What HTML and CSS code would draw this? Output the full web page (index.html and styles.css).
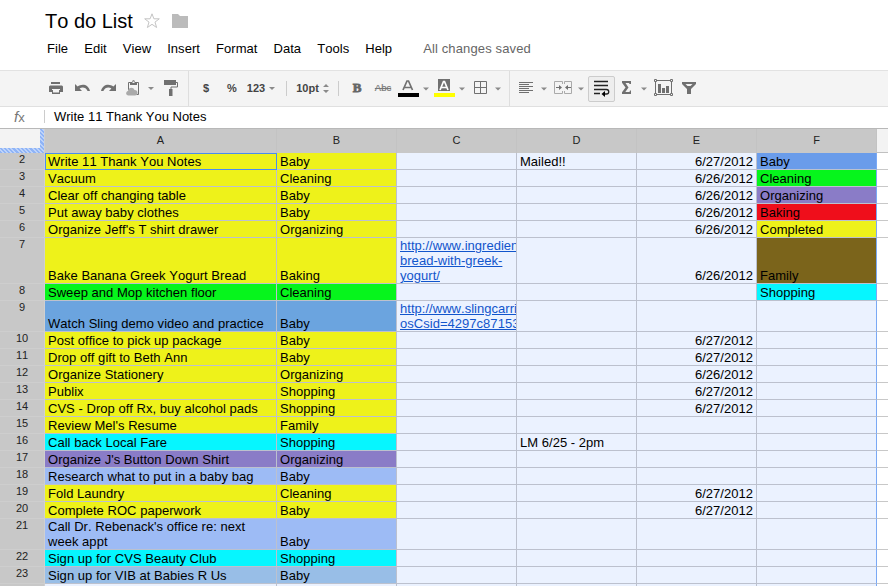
FILE: index.html
```
<!DOCTYPE html>
<html lang="en">
<head>
    <meta charset="UTF-8">
    <meta name="viewport" content="width=device-width, initial-scale=1.0">
    <title>To do List</title>
    <link rel="stylesheet" href="styles.css">
</head>
<body>
    <header class="header">
        <div class="title-row">
            <h1>To do List</h1>
            <svg class="star" width="16" height="16" viewBox="0 0 16 16"><path d="M8 .8l1.900 5h5.400l-4.300 3.300 1.600 5.400L8 11.300l-4.600 3.200L5 9.100.7 5.800h5.400z"/></svg>
            <svg class="folder" width="16" height="16" viewBox="0 0 16 16"><path d="M0 1h6l2 2h8v12H0z"/></svg>
        </div>
        <nav class="menu">
            <span>File</span>
            <span>Edit</span>
            <span>View</span>
            <span>Insert</span>
            <span>Format</span>
            <span>Data</span>
            <span>Tools</span>
            <span>Help</span>
            <span class="status">All changes saved</span>
        </nav>
    </header>

    <div class="toolbar">
        <div class="group group-edit">
            <svg width="27" height="21"><path d="M9 4h9v2H9zM8 7.500h12l1 1V14h-3v-3H10v3H7V8.500z"/><path d="M10 12h8v4h-8z"/><path class="paper" d="M11 12h6v2.500h-6z"/></svg>
            <svg width="26" height="21"><path d="M6 6v7h7l-2.400-2.400c2-1.700 6.400-1.700 8 2.400h2.400C19.500 6 12.500 5.200 8.600 8.600z"/></svg>
            <svg width="27" height="21"><path d="M21 6v7h-7l2.400-2.400c-2-1.700-6.400-1.700-8 2.400H6C7.500 6 14.500 5.200 18.400 8.600z"/></svg>
            <svg width="22" height="21"><path d="M6.500 12V4.500H9M13 4.500h3.500v12H13" class="line"/><path d="M8 4h2c0-2.500 3-2.500 3 0h2v3H8z"/><path class="paper" d="M10.500 3.500h2v1.500h-2z"/><path class="cloud" d="M6.500 17.500C3.500 17.500 3.500 13.500 6 13c.5-4 5.500-4 6.500-1 2 0 3 1.300 3 3s-1 2.500-2.500 2.500z"/></svg>
            <svg width="14" height="21"><path class="caret" d="M4 9h6l-3 3z"/></svg>
            <svg width="26" height="21"><path d="M6 2h12v5H6z"/><path d="M18 4.500h1.500v4.500h-6.500v3" class="line"/><path d="M11 11h3.500v7H11z"/></svg>
        </div>
        <div class="group group-number">
            <span class="tool dollar">$</span>
            <span class="tool percent">%</span>
            <span class="tool formats">123</span>
            <svg width="10" height="21"><path class="caret" d="M2 9h6l-3 3z"/></svg>
            <i class="divider divider-size"></i>
            <span class="tool size">10pt</span>
            <svg width="14" height="21"><path class="caret" d="M3 9h6L6 6zM3 12h6l-3 3z"/></svg>
            <i class="divider divider-style"></i>
            <span class="tool bold">B</span>
            <span class="tool strike">Abc</span>
            <svg width="23" height="21"><path d="M6 12l4-9h1.500l4 9M7.500 9.500h6.500" class="letter"/><path class="black" d="M1 15h21v4H1z"/></svg>
            <svg width="12" height="21"><path class="caret" d="M3 9.500h6l-3 3z"/></svg>
            <svg width="25" height="21"><path d="M6 1h12v12H6z"/><path d="M8 12l3.500-8.500h1L16 12M9.500 9.500h5" class="letter inverse"/><path class="yellow" d="M2 15h21v4H2z"/></svg>
            <svg width="10" height="21"><path class="caret" d="M2 9.500h6l-3 3z"/></svg>
            <svg width="27" height="21"><path d="M7.500 3.500h12v12h-12zM13.500 3.500v12M7.500 9.500h12" class="line"/></svg>
            <svg width="8" height="21"><path class="caret" d="M1 9.500h6l-3 3z"/></svg>
        </div>
        <div class="group group-layout">
            <svg width="22" height="21"><path d="M4 4.500h14M4 6.500h10M4 8.500h14M4 10.500h10M4 12.500h14M4 14.500h10" class="line"/></svg>
            <svg width="14" height="21"><path class="caret" d="M4 9.500h6l-3 3z"/></svg>
            <svg width="24" height="21"><path d="M11.500 6V3.500h-8v12h8V13M13.500 6V3.500h7v12h-7V13" class="line light"/><path d="M5 9h3V7l3 2.500L8 12v-2H5zM20 9h-3V7l-3 2.500 3 2.500v-2h3z"/></svg>
            <svg width="12" height="21"><path class="caret" d="M3 9.500h6l-3 3z"/></svg>
            <div class="wrap">
                <svg width="25" height="21"><path d="M5 3.500h14M5 7.500h14M5 11.500h12.500c3 0 3 4.500 0 4.500H14M5 15.500h6" class="line dark"/><path d="M12.500 16l3.500-3v6z" class="black"/></svg>
            </div>
            <svg width="23" height="21"><path d="M7 3h9v3h-1.500l-.5-1h-3.500l3 4.500-3.200 4.500H14.500l.5-1.500h1V16H7v-1.800L10.500 9.500 7 4.800z"/></svg>
            <svg width="12" height="21"><path class="caret" d="M3 9.500h6l-3 3z"/></svg>
            <svg class="chart" width="25" height="21"><path d="M4.500 2.500h16v14h-16z" class="line"/><path d="M7 6h3v9H7zM11 10h3v5h-3zM15 8h3v7h-3z"/><path d="M3.500 1.500h2v2h-2zM19.500 1.500h2v2h-2zM3.500 15.500h2v2h-2zM19.500 15.500h2v2h-2z" class="line handle"/></svg>
            <svg width="26" height="21"><path d="M6 4h14v2l-5 5v5h-4v-5L6 6z"/><path class="paper" d="M9.500 6h7l-2 2h-3z"/></svg>
        </div>
    </div>

    <div class="formula-bar">
        <span class="fx">f<small>x</small></span>
        <span class="formula">Write 11 Thank You Notes</span>
    </div>

    <table class="sheet">
        <colgroup>
            <col class="col-num"><col class="col-a"><col class="col"><col class="col"><col class="col"><col class="col"><col class="col"><col>
        </colgroup>
        <thead>
            <tr><th class="corner"></th><th>A</th><th>B</th><th>C</th><th>D</th><th>E</th><th>F</th><th class="rest"></th></tr>
        </thead>
        <tbody>
            <tr><th>2</th><td class="yellow active">Write 11 Thank You Notes</td><td class="yellow">Baby</td><td></td><td>Mailed!!</td><td>6/27/2012</td><td class="baby">Baby</td><td></td></tr>
            <tr><th>3</th><td class="yellow">Vacuum</td><td class="yellow">Cleaning</td><td></td><td></td><td>6/26/2012</td><td class="green">Cleaning</td><td></td></tr>
            <tr><th>4</th><td class="yellow">Clear off changing table</td><td class="yellow">Baby</td><td></td><td></td><td>6/26/2012</td><td class="purple">Organizing</td><td></td></tr>
            <tr><th>5</th><td class="yellow">Put away baby clothes</td><td class="yellow">Baby</td><td></td><td></td><td>6/26/2012</td><td class="red">Baking</td><td></td></tr>
            <tr><th>6</th><td class="yellow">Organize Jeff's T shirt drawer</td><td class="yellow">Organizing</td><td></td><td></td><td>6/26/2012</td><td class="yellow">Completed</td><td></td></tr>
            <tr class="lines-3"><th>7</th><td class="yellow">Bake Banana Greek Yogurt Bread</td><td class="yellow">Baking</td><td><a>http://www.ingredien<br>bread-with-greek-<br>yogurt/</a></td><td></td><td>6/26/2012</td><td class="brown">Family</td><td></td></tr>
            <tr><th>8</th><td class="green">Sweep and Mop kitchen floor</td><td class="green">Cleaning</td><td></td><td></td><td></td><td class="cyan">Shopping</td><td></td></tr>
            <tr class="lines-2"><th>9</th><td class="blue">Watch Sling demo video and practice</td><td class="blue">Baby</td><td><a>http://www.slingcarri<br>osCsid=4297c87153</a></td><td></td><td></td><td></td><td></td></tr>
            <tr><th>10</th><td class="yellow">Post office to pick up package</td><td class="yellow">Baby</td><td></td><td></td><td>6/27/2012</td><td></td><td></td></tr>
            <tr><th>11</th><td class="yellow">Drop off gift to Beth Ann</td><td class="yellow">Baby</td><td></td><td></td><td>6/27/2012</td><td></td><td></td></tr>
            <tr><th>12</th><td class="yellow">Organize Stationery</td><td class="yellow">Organizing</td><td></td><td></td><td>6/26/2012</td><td></td><td></td></tr>
            <tr><th>13</th><td class="yellow">Publix</td><td class="yellow">Shopping</td><td></td><td></td><td>6/27/2012</td><td></td><td></td></tr>
            <tr><th>14</th><td class="yellow">CVS - Drop off Rx, buy alcohol pads</td><td class="yellow">Shopping</td><td></td><td></td><td>6/27/2012</td><td></td><td></td></tr>
            <tr><th>15</th><td class="yellow">Review Mel's Resume</td><td class="yellow">Family</td><td></td><td></td><td></td><td></td><td></td></tr>
            <tr><th>16</th><td class="cyan">Call back Local Fare</td><td class="cyan">Shopping</td><td></td><td>LM 6/25 - 2pm</td><td></td><td></td><td></td></tr>
            <tr><th>17</th><td class="purple">Organize J's Button Down Shirt</td><td class="purple">Organizing</td><td></td><td></td><td></td><td></td><td></td></tr>
            <tr><th>18</th><td class="periwinkle">Research what to put in a baby bag</td><td class="periwinkle">Baby</td><td></td><td></td><td></td><td></td><td></td></tr>
            <tr><th>19</th><td class="yellow">Fold Laundry</td><td class="yellow">Cleaning</td><td></td><td></td><td>6/27/2012</td><td></td><td></td></tr>
            <tr><th>20</th><td class="yellow">Complete ROC paperwork</td><td class="yellow">Baby</td><td></td><td></td><td>6/27/2012</td><td></td><td></td></tr>
            <tr class="lines-2"><th>21</th><td class="periwinkle">Call Dr. Rebenack's office re: next<br>week appt</td><td class="periwinkle">Baby</td><td></td><td></td><td></td><td></td><td></td></tr>
            <tr><th>22</th><td class="cyan">Sign up for CVS Beauty Club</td><td class="cyan">Shopping</td><td></td><td></td><td></td><td></td><td></td></tr>
            <tr><th>23</th><td class="sky">Sign up for VIB at Babies R Us</td><td class="sky">Baby</td><td></td><td></td><td></td><td></td><td></td></tr>
            <tr><th></th><td></td><td></td><td></td><td></td><td></td><td></td><td></td></tr>
        </tbody>
    </table>
</body>
</html>
```
FILE: styles.css
```
:root {
    --icon: #707070;
    --bar: #f4f4f4;
    --head: #c8c8c8;
    --selected: #ebf2ff;
    --line: #bcc1ce;
    --blue-line: #7aa9f5;
}

* {
    box-sizing: border-box;
    margin: 0;
    padding: 0;
}

body {
    width: 888px;
    height: 586px;
    overflow: hidden;
    background: #fff;
    color: #000;
    font-family: "Liberation Sans", Arial, sans-serif;
    font-size: 13px;
    font-kerning: none;
}

/* Title and menu */
.header {
    height: 70px;
    padding-top: 9px;
}

.title-row {
    display: flex;
    align-items: center;
    height: 24px;
    padding-left: 45px;
}

h1 {
    font-size: 20px;
    font-weight: normal;
    line-height: 24px;
}

.star {
    margin-left: 11px;
    fill: none;
    stroke: #c4c4c4;
}

.folder {
    margin-left: 12px;
    fill: #bbb;
}

.menu {
    display: flex;
    padding: 8px 0 0 39px;
    letter-spacing: 0.05px;
    line-height: 15px;
}

.menu span {
    padding: 0 8px;
}

.menu .status {
    margin-left: 15px;
    color: #666;
    letter-spacing: 0.13px;
}

/* Toolbar */
.toolbar {
    display: flex;
    height: 37px;
    border-top: 1px solid #e2e2e2;
    border-bottom: 1px solid #e0e0e0;
    background: var(--bar);
}

.group {
    display: flex;
    align-items: center;
}

.group-edit {
    width: 189px;
    padding-left: 42px;
    border-right: 1px solid #dedede;
}

.group-number {
    width: 321px;
    padding-left: 4px;
    border-right: 1px solid #dedede;
}

.group-layout {
    padding-left: 5px;
}

.toolbar svg {
    display: block;
    flex: none;
    fill: var(--icon);
}

.toolbar .line {
    fill: none;
    stroke: var(--icon);
}

.toolbar .light {
    stroke: #aaa;
}

.toolbar .dark {
    stroke: #222;
    stroke-width: 1.3;
}

.toolbar .letter {
    fill: none;
    stroke: var(--icon);
    stroke-width: 1.7;
}

.toolbar .inverse {
    stroke: #fff;
}

.toolbar .paper,
.toolbar .handle {
    fill: var(--bar);
}

.toolbar .cloud {
    fill: #aaa;
}

.toolbar .caret {
    fill: #8a8a8a;
}

.toolbar .black {
    fill: #000;
}

.toolbar svg .yellow {
    fill: #ff0;
}

.tool {
    flex: none;
    padding-bottom: 1px;
    color: #444;
    font-size: 11px;
    font-weight: bold;
    text-align: center;
}

.dollar,
.percent {
    width: 26px;
}

.formats {
    width: 22px;
}

.size {
    width: 25px;
    margin-left: 8px;
}

.bold {
    width: 24px;
    margin-left: 6px;
    color: #666;
    font-family: "Liberation Serif", serif;
    font-size: 13px;
    -webkit-text-stroke: 0.8px #666;
}

.strike {
    width: 28px;
    padding-bottom: 2px;
    color: #777;
    font-size: 9.500px;
    font-weight: normal;
    -webkit-text-stroke: 0.2px #777;
    text-decoration: line-through;
}

.divider {
    width: 1px;
    height: 15px;
    background: #ccc;
}

.divider-size {
    margin-left: 9px;
}

.divider-style {
    margin-left: 4px;
}

.wrap {
    display: flex;
    align-items: center;
    width: 27px;
    height: 26px;
    margin-left: 1px;
    border: 1px solid #ccc;
    border-radius: 2px;
    background: #eee;
}

.chart {
    margin-left: 1px;
}

/* Formula bar */
.formula-bar {
    display: flex;
    align-items: center;
    height: 21px;
    padding-bottom: 2px;
}

.fx {
    width: 45px;
    height: 13px;
    padding-left: 14px;
    border-right: 1px solid #ccc;
    color: #777;
    font-size: 15px;
    font-style: italic;
    line-height: 14px;
}

.fx small {
    font-size: 13px;
    font-style: normal;
}

.formula {
    padding-left: 9px;
}

/* Spreadsheet grid */
.sheet {
    width: 888px;
    table-layout: fixed;
    border-collapse: separate;
    border-spacing: 0;
    border-top: 1px solid #b8b8b8;
}

.col-num {
    width: 45px;
}

.col-a {
    width: 232px;
}

.col {
    width: 120px;
}

.sheet th {
    background: var(--head);
    color: #222;
    font-size: 11px;
    font-weight: normal;
}

.sheet thead th {
    height: 24px;
    padding-bottom: 2px;
    border-right: 1px solid #c3c3c3;
    line-height: 13px;
}

/* striped handle for the frozen rows */
.sheet thead .corner {
    border-right: 1px solid #d0d0d0;
    background:
        linear-gradient(#f3f3f3, #f3f3f3) 0 0 / 40px 19px no-repeat,
        repeating-linear-gradient(45deg, #8fb4f7 0 1.500px, #bdd3fa 1.500px 3px);
}

.sheet thead .rest {
    border-right: 0;
    border-bottom: 1px solid #c0c0c0;
    background: #f3f3f3;
}

.sheet tbody tr {
    height: 17px;
}

.sheet tbody .lines-2 {
    height: 31px;
}

.sheet tbody .lines-3 {
    height: 46px;
}

.sheet tbody th {
    border-right: 1px solid #d0d0d0;
    border-bottom: 1px solid #cecece;
    line-height: 13px;
    vertical-align: top;
}

.sheet td {
    padding: 0 3px;
    overflow: hidden;
    border-right: 1px solid var(--line);
    border-bottom: 1px solid var(--line);
    background: var(--selected);
    letter-spacing: 0.03px;
    line-height: 15px;
    vertical-align: bottom;
    white-space: nowrap;
}

.sheet td:nth-child(6) {
    text-align: right;
}

.sheet td:nth-child(7) {
    border-right-color: var(--blue-line);
}

.sheet td:last-child {
    border-right: 0;
    border-color: #c8c8c8;
    background: #fff;
}

.sheet a {
    color: #1155cc;
    text-decoration: underline;
}

.sheet .active {
    border-color: #4a8cf0;
    box-shadow: inset 1px 1px #4a8cf0;
}

.sheet .yellow { background: #eef21a; }
.sheet .green { background: #06f51c; }
.sheet .baby { background: #6a9cea; }
.sheet .blue { background: #6ba4df; }
.sheet .periwinkle { background: #9dbbf5; }
.sheet .sky { background: #98bee7; }
.sheet .purple { background: #8a7cc7; }
.sheet .cyan { background: #06f6ff; }
.sheet .red { background: #ef0e1b; }
.sheet .brown { background: #7b641b; }
```
